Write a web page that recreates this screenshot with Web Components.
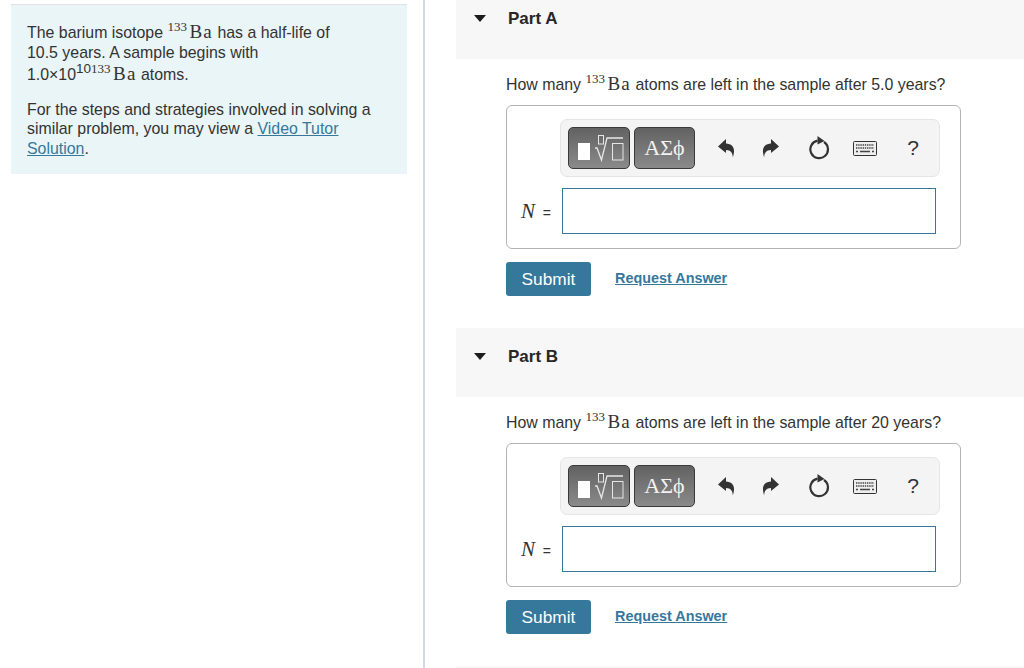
<!DOCTYPE html>
<html>
<head>
<meta charset="utf-8">
<title>Part A</title>
<style>
  html, body { margin: 0; padding: 0; background: #fff; }
  body { font-family: "Liberation Sans", Arial, sans-serif; font-size: 15.9px; color: #333; height: 668px; overflow: hidden; }
</style>
</head>
<body>

<template id="iso-tpl"><style>
    :host { display: inline; font-family: "Liberation Serif", serif; }
    sup { font-size: 13px; line-height: 0; position: relative; top: -7px; vertical-align: baseline; margin-right: 2.5px; }
    .ba { font-size: 19px; letter-spacing: 1.2px; line-height: 0; }
  </style><sup>133</sup><span class="ba">Ba</span></template>

<template id="page-tpl">
  <style>
    :host { display: grid; grid-template-columns: 425px 1fr; height: 668px; }
    .left { border-right: 2px solid #cfd6e4; box-sizing: border-box; padding: 4px 16px 0 11px; }
    .right { padding-left: 31px; display: flex; flex-direction: column; gap: 32px; overflow: hidden; }
  </style>
  <div class="left"><slot name="left"></slot></div>
  <div class="right"><slot></slot></div>
</template>

<template id="panel-tpl">
  <style>
    :host { display: block; background: #e9f5f7; border-top: 1px solid #dfe3e4; box-sizing: border-box; height: 170px; padding: 18px 16px 0; line-height: 19.6px; color: #333; }
    ::slotted(p) { margin: 0 0 15px; }
  </style>
  <slot></slot>
</template>

<template id="part-tpl">
  <style>
    :host { display: block; }
    header { height: 69px; background: #f7f7f7; box-sizing: border-box; display: flex; align-items: flex-start; padding: 20px 0 0 18px; }
    .tri { width: 0; height: 0; border-left: 6px solid transparent; border-right: 6px solid transparent; border-top: 7px solid #1d1d1d; margin: 5px 22px 0 0; }
    h2 { margin: 0; font-size: 17px; font-weight: 700; line-height: 18px; color: #272727; }
    .body { padding: 16px 0 0 50px; }
    .q { line-height: 20px; height: 20px; }
    .actions { display: flex; align-items: center; margin-top: 13px; gap: 24px; }
    .submit { width: 85px; height: 34px; background: #36789b; color: #fff; border-radius: 3px; display: flex; align-items: center; justify-content: center; font-size: 17.3px; }
    .req { color: #36789b; font-weight: 700; font-size: 14.4px; text-decoration: underline; margin-bottom: 2px; }
  </style>
  <header><span class="tri"></span><h2><slot name="title"></slot></h2></header>
  <div class="body">
    <div class="q"><slot name="question"></slot></div>
    <answer-box></answer-box>
    <div class="actions"><span class="submit">Submit</span><span class="req">Request Answer</span></div>
  </div>
</template>

<template id="answer-tpl">
  <style>
    :host { display: block; box-sizing: border-box; width: 455px; height: 144px; margin-top: 10px; border: 1px solid #b3b3b3; border-radius: 6px; padding: 13px 24px 0 13px; }
    math-toolbar { margin-left: 40px; }
    .row { display: flex; align-items: center; margin-top: 11px; }
    .label { width: 42px; padding-right: 11px; box-sizing: border-box; text-align: right; font-size: 14px; white-space: nowrap; color: #333; }
    .label i { font-family: "Liberation Serif", serif; font-size: 21px; margin-right: 4px; }
    .input { width: 374px; height: 46px; box-sizing: border-box; border: 1px solid #36789b; background: #fff; }
  </style>
  <math-toolbar></math-toolbar>
  <div class="row"><span class="label"><i>N</i> =</span><div class="input"></div></div>
</template>

<template id="toolbar-tpl">
  <style>
    :host { display: block; box-sizing: border-box; width: 380px; height: 58px; background: #f4f4f4; border: 1px solid #e5e5e5; border-radius: 7px; }
    .bar { display: flex; align-items: center; height: 56px; padding-left: 7px; }
    .btn { height: 42px; box-sizing: border-box; border: 1px solid #3a3a3a; border-radius: 5px; background: linear-gradient(#626262, #8a8a8a); display: flex; align-items: center; justify-content: center; color: #f2f2f2; }
    .tmpl { width: 62px; }
    .sym { width: 61px; margin-left: 4px; font-family: "Liberation Serif", serif; font-size: 22px; }
    svg { display: block; }
    .ic { display: flex; justify-content: center; width: 48px; }
    .q { font-size: 21px; color: #333; width: 49px; text-align: center; }
  </style>
  <div class="bar">
    <div class="btn tmpl">
      <svg width="60" height="40" viewBox="0 0 60 40">
        <rect x="9" y="15" width="12" height="17" fill="#fff"/>
        <rect x="29.500" y="7.500" width="5" height="8.500" fill="none" stroke="#e6e6e6"/>
        <path d="M26 20h2l4.500 12L38 10h16" fill="none" stroke="#e6e6e6" stroke-width="1.300"/>
        <rect x="43.500" y="15.500" width="10.500" height="16.500" fill="none" stroke="#e6e6e6"/>
      </svg>
    </div>
    <div class="btn sym">ΑΣϕ</div>
    <div class="ic" style="margin-left:7px">
      <svg width="18" height="20" viewBox="0 0 18 20"><path d="M1 8.500 9 1v4.500c5 .3 8.500 3 8 8.500-.2 2-.7 4-1.200 5.500.2-4-2-7.500-6.800-7.500V15z" fill="#333"/></svg>
    </div>
    <div class="ic" style="margin-left:-3px">
      <svg width="18" height="20" viewBox="0 0 18 20"><path d="M17 8.500 9 1v4.500c-5 .3-8.500 3-8 8.500.2 2 .7 4 1.200 5.500-.2-4 2-7.500 6.800-7.500V15z" fill="#333"/></svg>
    </div>
    <div class="ic">
      <svg width="22" height="24" viewBox="0 0 22 24"><path d="M9.500 4.700A8.800 8.800 0 1 0 16 6" fill="none" stroke="#333" stroke-width="2.200"/><path d="M9.500 0l7 5-7 3.500z" fill="#333"/></svg>
    </div>
    <div class="ic" style="margin-left:-2.500px">
      <svg width="24" height="15" viewBox="0 0 24 15"><rect x=".5" y=".5" width="23" height="14" rx="1" fill="#eee" stroke="#333"/><path d="M3 4h18M3 7h18" stroke="#444" stroke-width="1.400" stroke-dasharray="1.400 .8"/><path d="M3 10.500h2M7 10.500h10M19 10.500h2" stroke="#444" stroke-width="1.400"/></svg>
    </div>
    <div class="q">?</div>
  </div>
</template>

<problem-page>
  <problem-panel slot="left">
    <p>The barium isotope <iso-ba></iso-ba> has a half-life of<br>10.5 years. A sample begins with<span style="display:block;margin-top:3px">1.0×10<sup style="font-size:13.5px;line-height:0;position:relative;top:-7px;vertical-align:baseline">10</sup><iso-ba></iso-ba> atoms.</span></p>
    <p>For the steps and strategies involved in solving a<br>similar problem, you may view a <a href="#" style="color:#36789b">Video Tutor<br>Solution</a>.</p>
  </problem-panel>
  <part-section style="margin-top:-10px">
    <span slot="title">Part A</span>
    <span slot="question">How many <iso-ba></iso-ba> atoms are left in the sample after 5.0 years?</span>
  </part-section>
  <part-section>
    <span slot="title">Part B</span>
    <span slot="question">How many <iso-ba></iso-ba> atoms are left in the sample after 20 years?</span>
  </part-section>
  <div style="height:69px;flex:none;background:#f7f7f7"></div>
</problem-page>

<script>
  function fromTemplate(id) {
    return class extends HTMLElement {
      constructor() {
        super();
        this.attachShadow({ mode: 'open' }).appendChild(document.getElementById(id).content.cloneNode(true));
      }
    };
  }
  customElements.define('iso-ba', fromTemplate('iso-tpl'));
  customElements.define('problem-page', fromTemplate('page-tpl'));
  customElements.define('problem-panel', fromTemplate('panel-tpl'));
  customElements.define('part-section', fromTemplate('part-tpl'));
  customElements.define('answer-box', fromTemplate('answer-tpl'));
  customElements.define('math-toolbar', fromTemplate('toolbar-tpl'));
</script>
</body>
</html>
